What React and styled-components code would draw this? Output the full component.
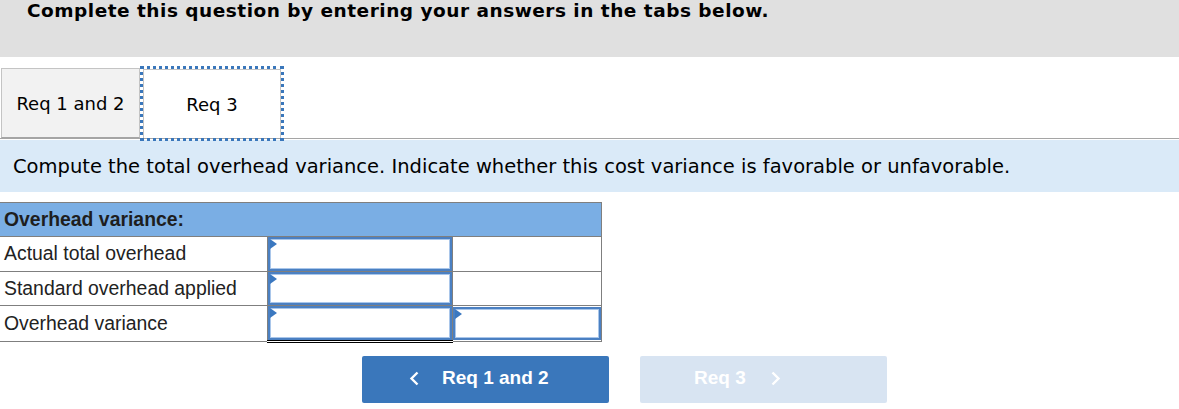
import styled, { createGlobalStyle } from "styled-components";

const Global = createGlobalStyle`
  body {
    margin: 0;
    background: #fff;
    font-family: "DejaVu Sans", Verdana, sans-serif;
    color: #000;
  }
`;

const Banner = styled.div`
  height: 57px;
  background: #e0e0e0;
  padding-left: 27px;
  box-sizing: border-box;
  h2 {
    margin: 0;
    font-size: 18.5px;
    letter-spacing: 0.5px;
    font-weight: bold;
    line-height: 21px;
  }
`;

const TabBar = styled.div`
  display: flex;
  margin-top: 11px;
  padding-left: 1px;
  border-bottom: 1px solid #a5a5a5;
`;

const Tab = styled.div`
  box-sizing: border-box;
  width: ${(p) => p.$w}px;
  height: ${(p) => (p.$active ? 69 : 70)}px;
  margin-top: ${(p) => (p.$active ? 1 : 0)}px;
  margin-left: ${(p) => (p.$active ? 3 : 0)}px;
  display: flex;
  align-items: center;
  justify-content: center;
  font-size: 18px;
  background: ${(p) => (p.$active ? "#fff" : "#f2f2f2")};
  border: 1px solid #c4c4c4;
  border-bottom: ${(p) => (p.$active ? "none" : "1px solid #a5a5a5")};
  outline: ${(p) => (p.$active ? "3px dotted #3a77bb" : "none")};
  outline-offset: 0;
`;

const Prompt = styled.div`
  margin-top: 1px;
  height: 52px;
  background: #daeaf8;
  display: flex;
  align-items: center;
  padding-left: 13px;
  padding-top: 1px;
  box-sizing: border-box;
  font-size: 19.5px;
`;

const Table = styled.table`
  margin-top: 10px;
  border-collapse: collapse;
  font-family: "Liberation Sans", Arial, sans-serif;
  font-size: 19.4px;
  color: #222;
  td,
  th {
    border: 1px solid #7f7f7f;
    padding: 0;
    height: 33.5px;
  }
  th {
    height: 33px;
  }
  td:first-child,
  th:first-child {
    border-left: none;
  }
`;

const HeadCell = styled.th`
  background: #7aaee4;
  text-align: left;
  font-weight: bold;
  padding-left: 4px !important;
  color: #1e1e1e;
`;

const Label = styled.td`
  width: 263px;
  padding-left: 4px !important;
`;

const Cell = styled.td`
  width: ${(p) => p.$w}px;
  position: relative;
  ${(p) => p.$double && "border-bottom: 3px double #000 !important;"}
`;

const Input = styled.div`
  position: relative;
  box-sizing: border-box;
  height: 33.5px;
  border: 2px solid #4b80c2;
  box-shadow: inset 0 0 0 1px #a9c6ea;
  background: #fff;
  &::before {
    content: "";
    position: absolute;
    left: 0;
    top: 0;
    border-top: 5px solid transparent;
    border-bottom: 5px solid transparent;
    border-left: 7px solid #3b78c0;
  }
`;

const Nav = styled.div`
  display: flex;
  gap: 31px;
  margin-top: 13px;
  padding-left: 362px;
`;

const NavButton = styled.div`
  box-sizing: border-box;
  width: 247px;
  height: 47px;
  border-radius: 2px;
  display: flex;
  align-items: center;
  gap: ${(p) => p.$gap}px;
  padding-left: ${(p) => p.$pad}px;
  padding-bottom: 2px;
  background: ${(p) => (p.$disabled ? "#d8e4f2" : "#3a77bb")};
  color: #fff;
  font-family: "Liberation Sans", Arial, sans-serif;
  font-weight: bold;
  font-size: 19px;
  svg {
    width: 11px;
    height: 15px;
  }
`;

const Chevron = ({ left }) => (
  <svg viewBox="0 0 11 15" fill="none" stroke="#fff" strokeWidth="2.4">
    {left ? <path d="M8.5 1.5 L2.5 7.5 L8.5 13.5" /> : <path d="M2.5 1.5 L8.5 7.5 L2.5 13.5" />}
  </svg>
);

const rows = [
  { label: "Actual total overhead", extra: false },
  { label: "Standard overhead applied", extra: false },
  { label: "Overhead variance", extra: true },
];

export default function App() {
  return (
    <>
      <Global />
      <Banner>
        <h2>Complete this question by entering your answers in the tabs below.</h2>
      </Banner>
      <TabBar>
        <Tab $w={139}>Req 1 and 2</Tab>
        <Tab $w={138} $active>
          Req 3
        </Tab>
      </TabBar>
      <Prompt>
        Compute the total overhead variance. Indicate whether this cost variance is favorable or unfavorable.
      </Prompt>
      <Table>
        <tbody>
          <tr>
            <HeadCell colSpan={3}>Overhead variance:</HeadCell>
          </tr>
          {rows.map((r) => (
            <tr key={r.label}>
              <Label>{r.label}</Label>
              <Cell $w={184} $double={r.extra}>
                <Input />
              </Cell>
              <Cell $w={148}>{r.extra && <Input />}</Cell>
            </tr>
          ))}
        </tbody>
      </Table>
      <Nav>
        <NavButton $pad={47} $gap={22}>
          <Chevron left />
          Req 1 and 2
        </NavButton>
        <NavButton $pad={54} $gap={24} $disabled>
          Req 3
          <Chevron />
        </NavButton>
      </Nav>
    </>
  );
}
